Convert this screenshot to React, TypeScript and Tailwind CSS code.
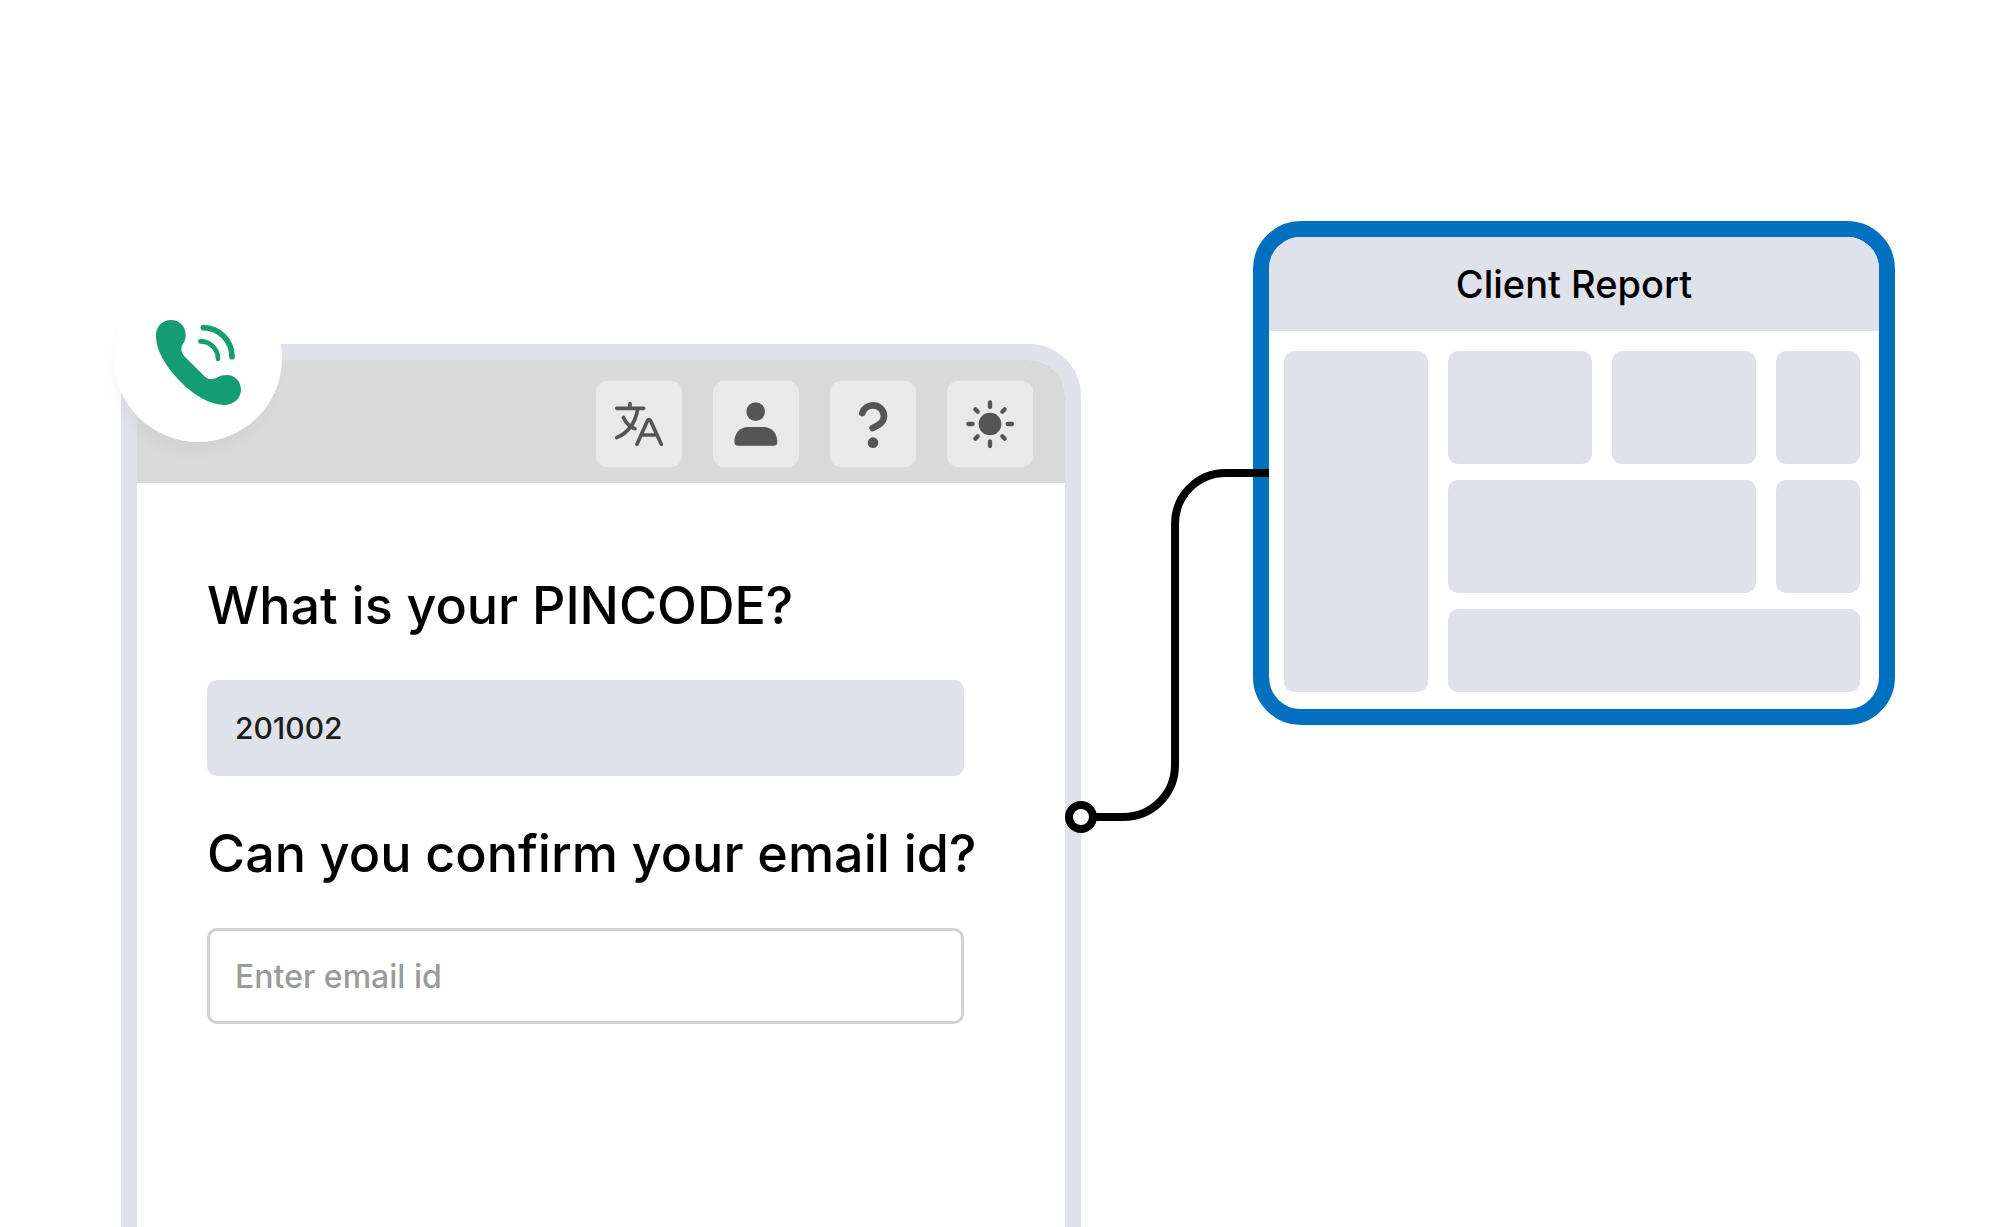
import { useState } from "react";
import type { ReactNode } from "react";

const TILES = [
  "row-span-3",
  "",
  "",
  "",
  "col-span-2",
  "",
  "col-span-3",
];

const CallIcon = () => (
  <svg viewBox="42 42 504 504" className="w-full h-full" fill="none" aria-hidden="true">
    <path
      d="M168 232C166 200 186 180 213 180C238 180 257 199 257 224C257 236 254 244 248 253C242 263 243 278 253 289L315 350C325 360 341 359 353 352C361 347 370 345 380 345C404 345 423 364 423 388C423 416 401 436 370 435C330 433 285 410 240 364C195 318 169 270 168 232Z"
      fill="#169c72"
    />
    <path d="M310 203C358 204 396 242 396 290" stroke="#169c72" strokeWidth="17" strokeLinecap="round" />
    <path d="M301 244C331 244 354 267 354 297" stroke="#169c72" strokeWidth="14" strokeLinecap="round" />
  </svg>
);

const TranslateIcon = () => (
  <svg viewBox="45 153 258 258" className="w-full h-full" fill="none" aria-hidden="true">
    <g stroke="#555555" strokeWidth="11" strokeLinecap="round" strokeLinejoin="round">
      <path d="M107 235H188M147 221V235" />
      <path d="M170 238C163 279 141 308 107 323" />
      <path d="M127 262C135 280 148 292 162 296" />
      <path d="M168 343L199 273Q204 265 209 273L241 343M182 315H227" />
    </g>
  </svg>
);

const PersonIcon = () => (
  <svg viewBox="398 153 258 258" className="w-full h-full" fill="#555555" aria-hidden="true">
    <circle cx="526" cy="245" r="28" />
    <path d="M503 291H550C575 291 591 311 591 336Q591 347 580 347H473Q462 347 462 336C462 311 478 291 503 291Z" />
  </svg>
);

const HelpIcon = () => (
  <svg viewBox="59 153 258 258" className="w-full h-full" fill="none" aria-hidden="true">
    <path
      d="M156 249C161 234 174 226 188 226C207 226 221 241 221 259C221 276 207 286 187 294"
      stroke="#555555"
      strokeWidth="20"
      strokeLinecap="round"
    />
    <circle cx="188" cy="338" r="16" fill="#555555" />
  </svg>
);

const SunIcon = () => (
  <svg viewBox="411 153 258 258" className="w-full h-full" fill="none" aria-hidden="true">
    <circle cx="540" cy="282" r="34" fill="#555555" />
    <path
      d="M540 217V231M540 334V348M475 282H488M593 282H606M496 238L503 245M584 238L577 245M496 326L503 319M577 319L584 326"
      stroke="#555555"
      strokeWidth="13"
      strokeLinecap="round"
    />
  </svg>
);

const TOOLS: { label: string; icon: ReactNode }[] = [
  { label: "Language", icon: <TranslateIcon /> },
  { label: "Profile", icon: <PersonIcon /> },
  { label: "Help", icon: <HelpIcon /> },
  { label: "Brightness", icon: <SunIcon /> },
];

function Question({
  id,
  label,
  value,
  placeholder,
  className,
  onChange,
}: {
  id: string;
  label: string;
  value: string;
  placeholder?: string;
  className: string;
  onChange: (v: string) => void;
}) {
  return (
    <div className="flex flex-col gap-[42px]">
      <label htmlFor={id} className="text-[52px] leading-[64px] font-medium whitespace-nowrap">
        {label}
      </label>
      <input
        id={id}
        type="text"
        value={value}
        placeholder={placeholder}
        onChange={(e) => onChange(e.target.value)}
        className={`w-full h-24 rounded-[10px] border-[3px] px-[25px] font-medium outline-none ${className}`}
      />
    </div>
  );
}

function FormPanel() {
  const [pincode, setPincode] = useState("201002");
  const [email, setEmail] = useState("");

  return (
    <section className="relative mt-[344px] rounded-t-[52px] border-[16px] border-b-0 border-[#dfe2eb] bg-white">
      <div className="absolute -left-[23px] -top-[86px] size-[168px] rounded-full bg-white shadow-[-4px_12px_16px_-4px_rgba(0,0,0,0.04)]">
        <CallIcon />
      </div>
      <header className="flex justify-end gap-[31px] rounded-t-[36px] bg-[#d9d9d9] pt-[21px] pb-4 pr-8">
        {TOOLS.map((t) => (
          <button
            key={t.label}
            type="button"
            aria-label={t.label}
            className="size-[86px] rounded-[11px] bg-[#e9e9e9]"
          >
            {t.icon}
          </button>
        ))}
      </header>
      <div className="flex flex-col gap-[46px] pt-[91px] pl-[70px] pr-[101px]">
        <Question
          id="pincode"
          label="What is your PINCODE?"
          value={pincode}
          onChange={setPincode}
          className="border-[#dfe2eb] bg-[#dfe2eb] text-[30px] text-[#1d1d1b]"
        />
        <Question
          id="email"
          label="Can you confirm your email id?"
          value={email}
          placeholder="Enter email id"
          onChange={setEmail}
          className="border-[#d2d2d2] bg-white text-[32px] text-[#1d1d1b] placeholder:text-[#9b9b9b]"
        />
      </div>
    </section>
  );
}

const Connector = () => (
  <div className="relative z-10 -mx-4 mt-[469px]">
    <svg viewBox="0 0 204 366" className="w-full h-auto" fill="none" stroke="#000000" strokeWidth="8" aria-hidden="true">
      <path d="M204 4H161C132 4 110 27 110 55V296C110 325 87 348 58 348H28" />
      <circle cx="16" cy="348" r="12" fill="#ffffff" />
    </svg>
  </div>
);

function ReportPanel() {
  return (
    <section className="mt-[221px] self-start rounded-[48px] border-[16px] border-[#0070bf] bg-white">
      <h2 className="rounded-t-[32px] bg-[#dfe2eb] py-6 text-center text-[38px] leading-[46px] font-medium">
        Client Report
      </h2>
      <div className="grid grid-cols-[144fr_144fr_144fr_84fr] grid-rows-[113px_113px_83px] gap-x-5 gap-y-4 pt-5 pb-[17px] pl-[15px] pr-[19px]">
        {TILES.map((span, i) => (
          <div key={i} className={`rounded-[10px] bg-[#dfe2eb] ${span}`} />
        ))}
      </div>
    </section>
  );
}

export default function App() {
  return (
    <main className="grid min-h-screen grid-cols-[minmax(0,960fr)_minmax(0,172fr)_minmax(0,642fr)] bg-white pl-[121px] pr-[105px] font-[Inter,sans-serif] text-black">
      <FormPanel />
      <Connector />
      <ReportPanel />
    </main>
  );
}
